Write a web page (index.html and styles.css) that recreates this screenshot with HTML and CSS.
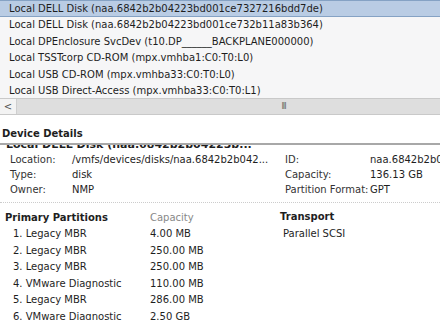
FILE: index.html
```html
<!DOCTYPE html>
<html lang="en">
<head>
    <meta charset="UTF-8">
    <title>Storage Devices</title>
    <link rel="stylesheet" href="styles.css">
</head>
<body>
    <div class="device-list">
        <div class="rows">
            <div class="row selected">Local DELL Disk (naa.6842b2b04223bd001ce7327216bdd7de)</div>
            <div class="row">Local DELL Disk (naa.6842b2b04223bd001ce732b11a83b364)</div>
            <div class="row">Local DPEnclosure SvcDev (t10.DP______BACKPLANE000000)</div>
            <div class="row">Local TSSTcorp CD-ROM (mpx.vmhba1:C0:T0:L0)</div>
            <div class="row">Local USB CD-ROM (mpx.vmhba33:C0:T0:L0)</div>
            <div class="row">Local USB Direct-Access (mpx.vmhba33:C0:T0:L1)</div>
        </div>
        <div class="hscroll">
            <div class="scroll-btn">&lt;</div>
            <div class="scroll-thumb"><span class="grip">III</span></div>
        </div>
    </div>

    <div class="details-header">Device Details</div>

    <div class="details">
        <div class="device-title">Local DELL Disk (naa.6842b2b04223b...</div>
        <div class="props">
            <div class="prop-col">
                <div class="prop"><span class="prop-label">Location:</span><span class="prop-value">/vmfs/devices/disks/naa.6842b2b042...</span></div>
                <div class="prop"><span class="prop-label">Type:</span><span class="prop-value">disk</span></div>
                <div class="prop"><span class="prop-label">Owner:</span><span class="prop-value">NMP</span></div>
            </div>
            <div class="prop-col right">
                <div class="prop"><span class="prop-label">ID:</span><span class="prop-value">naa.6842b2b04223bd001ce7327216bdd7de</span></div>
                <div class="prop"><span class="prop-label">Capacity:</span><span class="prop-value">136.13 GB</span></div>
                <div class="prop"><span class="prop-label">Partition Format:</span><span class="prop-value">GPT</span></div>
            </div>
        </div>

        <div class="partitions">
            <div class="part-table">
                <div class="part-head">Primary Partitions</div>
                <div class="part-cap head">Capacity</div>
                <div class="part-name">1. Legacy MBR</div>
                <div class="part-cap">4.00 MB</div>
                <div class="part-name">2. Legacy MBR</div>
                <div class="part-cap">250.00 MB</div>
                <div class="part-name">3. Legacy MBR</div>
                <div class="part-cap">250.00 MB</div>
                <div class="part-name">4. VMware Diagnostic</div>
                <div class="part-cap">110.00 MB</div>
                <div class="part-name">5. Legacy MBR</div>
                <div class="part-cap">286.00 MB</div>
                <div class="part-name">6. VMware Diagnostic</div>
                <div class="part-cap">2.50 GB</div>
            </div>
            <div class="transport">
                <div class="part-head">Transport</div>
                <div class="transport-value">Parallel SCSI</div>
            </div>
        </div>
    </div>
</body>
</html>
```

FILE: styles.css
```css
body {
    margin: 0;
    width: 440px;
    height: 320px;
    overflow: hidden;
    background: #ffffff;
    font-family: "DejaVu Sans", sans-serif;
    font-size: 10px;
    color: #1e1e1e;
}

.device-list {
    background: #f6f6f7;
}

.rows {
    height: 98px;
    overflow: hidden;
}

.row {
    height: 16.5px;
    line-height: 16.5px;
    padding-left: 9px;
    white-space: nowrap;
}

.row.selected {
    height: 15px;
    line-height: 15px;
    background: #b9cce4;
    border-top: 1px solid #85a2c4;
    border-bottom: 1px solid #85a2c4;
}

.hscroll {
    display: flex;
    height: 15px;
    border-top: 1px solid #c9c9c9;
    border-bottom: 1px solid #c9c9c9;
    background: #e6e6e6;
}

.scroll-btn {
    width: 16px;
    background: #f3f3f3;
    border-right: 1px solid #cfcfcf;
    text-align: center;
    line-height: 15px;
    color: #555555;
}

.scroll-thumb {
    flex: 1;
    display: flex;
    justify-content: center;
    align-items: center;
    background: #dedede;
}

.grip {
    font-size: 8px;
    letter-spacing: -1px;
    color: #666666;
    margin-left: 110px;
}

.details-header {
    margin-top: 10px;
    height: 18px;
    line-height: 18px;
    padding-left: 2px;
    font-weight: bold;
    border-bottom: 2px solid #a8a8a8;
}

.details {
    height: 178px;
    overflow: hidden;
}

.device-title {
    margin-top: -7px;
    padding-left: 6px;
    font-weight: bold;
    font-size: 11px;
    line-height: 14px;
    white-space: nowrap;
}

.props {
    display: flex;
    padding: 0 0 5px;
    border-bottom: 1px dotted #cccccc;
}

.prop-col {
    width: 275px;
    flex-shrink: 0;
}

.prop-col.right {
    width: auto;
}

.prop {
    display: flex;
    height: 15px;
    line-height: 15px;
    white-space: nowrap;
}

.prop-label {
    width: 62px;
    padding-left: 10px;
    color: #333333;
    flex-shrink: 0;
}

.prop-col.right .prop-label {
    width: 85px;
    padding-left: 10px;
}

.partitions {
    display: flex;
    padding-top: 6px;
}

.part-table {
    display: grid;
    grid-template-columns: 150px 125px;
    grid-auto-rows: 16.5px;
    align-items: center;
}

.part-head {
    font-weight: bold;
    padding-left: 5px;
}

.part-name {
    padding-left: 13px;
}

.part-cap.head {
    color: #888888;
}

.transport {
    display: flex;
    flex-direction: column;
}

.transport .part-head {
    height: 16.5px;
    line-height: 16.5px;
    padding-left: 5px;
}

.transport-value {
    height: 16.5px;
    line-height: 16.5px;
    padding-left: 8px;
}
```
